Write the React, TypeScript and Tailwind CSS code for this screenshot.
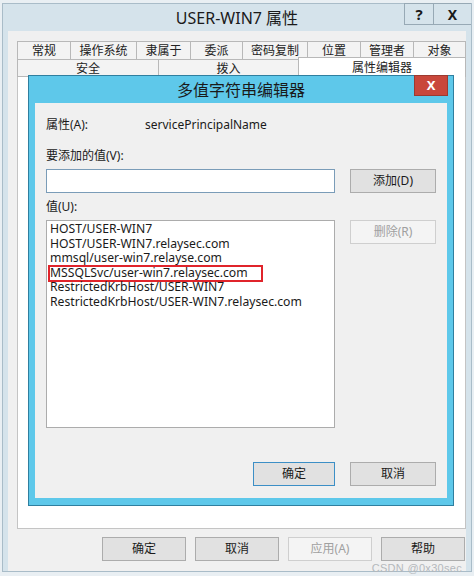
const font = "font-['Segoe_UI','Noto_Sans','Noto_Sans_CJK_SC',sans-serif]";

const row1 = [
  { label: "常规", w: "w-[53px]" },
  { label: "操作系统", w: "w-[66px]" },
  { label: "隶属于", w: "w-[54px]" },
  { label: "委派", w: "w-[52px]" },
  { label: "密码复制", w: "w-[65px]" },
  { label: "位置", w: "w-[53px]" },
  { label: "管理者", w: "w-[53px]" },
  { label: "对象", w: "w-[53px]" },
];

const values = [
  "HOST/USER-WIN7",
  "HOST/USER-WIN7.relaysec.com",
  "mmsql/user-win7.relayse.com",
  "MSSQLSvc/user-win7.relaysec.com",
  "RestrictedKrbHost/USER-WIN7",
  "RestrictedKrbHost/USER-WIN7.relaysec.com",
];

function Btn({
  children,
  w = "w-[84px]",
  disabled = false,
  primary = false,
}: {
  children: React.ReactNode;
  w?: string;
  disabled?: boolean;
  primary?: boolean;
}) {
  return (
    <div
      className={[
        "h-[24px] flex items-center justify-center text-[12px] border",
        w,
        disabled
          ? "bg-[#f4f4f4] border-[#cfcfcf] text-[#a0a0a0]"
          : primary
          ? "bg-[#e1e1e1] border-[#3c8fc6] text-[#1a1a1a]"
          : "bg-[#e1e1e1] border-[#acacac] text-[#1a1a1a]",
      ].join(" ")}
    >
      {children}
    </div>
  );
}

export default function App() {
  return (
    <div className={`relative w-[474px] h-[576px] overflow-hidden bg-[#e9eff3] ${font}`}>
      {/* outer property window */}
      <div className="ml-[2px] mt-[3px] w-[470px] h-[569px] border border-[#a9bcc8] bg-[#d5e3eb] flex flex-col">
        <div className="relative h-[27px] flex items-center justify-center text-[16px] text-[#1a1a1a]">
          USER-WIN7 属性
          <div className="absolute right-[0px] top-[-1px] flex">
            <div className="w-[29px] h-[22px] border border-[#97a9b5] border-r-0 flex items-center justify-center text-[15px] font-bold">
              ?
            </div>
            <div className="w-[38px] h-[22px] border border-[#97a9b5] border-r-0 flex items-center justify-center text-[14px] font-bold">
              X
            </div>
          </div>
        </div>
        <div className="mx-[5px] flex-1 bg-[#f0f0f0] pt-[10px] flex flex-col">
          {/* tabs */}
          <div className="ml-[9px] w-[449px] text-[12px] text-[#222]">
            <div className="flex h-[19px]">
              {row1.map((t) => (
                <div
                  key={t.label}
                  className={`${t.w} border border-r-0 last:border-r border-[#b8b8b8] bg-[#f3f3f3] flex items-center justify-center`}
                >
                  {t.label}
                </div>
              ))}
            </div>
            <div className="flex h-[17px] items-end">
              <div className="w-[141px] h-[17px] border border-t-0 border-r-0 border-[#b8b8b8] bg-[#f3f3f3] flex items-center justify-center leading-none pt-[2px]">
                安全
              </div>
              <div className="w-[140px] h-[17px] border border-t-0 border-r-0 border-[#b8b8b8] bg-[#f3f3f3] flex items-center justify-center leading-none pt-[2px]">
                拨入
              </div>
              <div className="w-[168px] h-[20px] -mt-[3px] border border-b-0 border-[#b8b8b8] bg-white flex items-end justify-center pb-[3px] leading-none">
                属性编辑器
              </div>
            </div>
          </div>
          <div className="ml-[9px] w-[449px] h-[452px] bg-white border border-t-0 border-[#c4c4c4]" />
          <div className="flex justify-end gap-[9px] mt-[8px] pr-[1px] text-[12px]">
            <Btn>确定</Btn>
            <Btn>取消</Btn>
            <Btn disabled>应用(A)</Btn>
            <Btn>帮助</Btn>
          </div>
        </div>
      </div>

      <div className="absolute right-[12px] bottom-[2px] leading-[12px] text-[11px] text-[#b4b8bc] font-['Liberation_Sans',sans-serif] tracking-[0.3px]">
        CSDN @0x30sec
      </div>

      {/* multi-valued string editor */}
      <div className="absolute left-[28px] top-[75px] w-[426px] h-[431px] border border-[#2f7f9f] bg-[#5ec8ea] flex flex-col">
        <div className="relative h-[27px] flex items-center justify-center text-[16px] text-[#1a1a1a]">
          多值字符串编辑器
          <div className="absolute right-[5px] top-[-1px] w-[34px] h-[21px] bg-[#c9473b] border border-[#9c3a30] flex items-center justify-center text-white text-[13px] font-bold">
            X
          </div>
        </div>
        <div className="mx-[6px] mb-[7px] flex-1 bg-[#f0f0f0] px-[11px] pt-[14px] text-[12px] text-[#1a1a1a] flex flex-col">
          <div className="flex h-[16px] items-center">
            <span className="w-[99px]">属性(A):</span>
            <span>servicePrincipalName</span>
          </div>
          <div className="mt-[15px] h-[16px] flex items-center">要添加的值(V):</div>
          <div className="mt-[5px] flex justify-between">
            <div className="w-[289px] h-[24px] bg-white border border-[#7a9cb8]" />
            <Btn w="w-[86px]">添加(D)</Btn>
          </div>
          <div className="mt-[6px] h-[16px] flex items-center">值(U):</div>
          <div className="mt-[5px] flex justify-between">
            <div className="w-[289px] h-[208px] bg-white border border-[#acacac] pt-[1px] pl-[3px] text-[12.2px] leading-[14.6px]">
              {values.map((v) => (
                <div key={v} className="relative whitespace-nowrap">
                  {v}
                  {v.startsWith("MSSQL") && (
                    <span className="absolute -left-[2px] -top-[1px] w-[215px] h-[17px] border-2 border-[#e0242b]" />
                  )}
                </div>
              ))}
            </div>
            <Btn w="w-[86px]" disabled>
              删除(R)
            </Btn>
          </div>
          <div className="mt-[34px] flex justify-end gap-[15px]">
            <Btn w="w-[82px]" primary>
              确定
            </Btn>
            <Btn w="w-[86px]">取消</Btn>
          </div>
        </div>
      </div>
    </div>
  );
}
